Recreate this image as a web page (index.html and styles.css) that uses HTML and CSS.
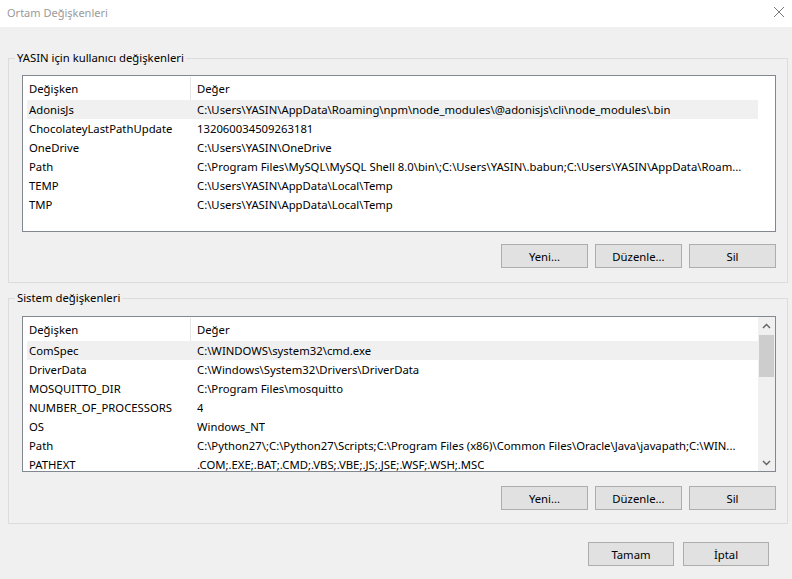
FILE: index.html
```html
<!DOCTYPE html>
<html lang="tr">
<head>
    <meta charset="UTF-8">
    <title>Ortam Değişkenleri</title>
    <link rel="stylesheet" href="styles.css">
</head>
<body>
    <div class="titlebar">
        <span class="title">Ortam Değişkenleri</span>
        <svg class="close" width="12" height="12" viewBox="0 0 12 12">
            <path d="M1 1 L11 11 M11 1 L1 11" stroke="#7a7a7a" stroke-width="1" fill="none"/>
        </svg>
    </div>

    <div class="content">
        <div class="group group-user">
            <div class="group-label">YASIN için kullanıcı değişkenleri</div>
            <div class="list list-user">
                <div class="list-main">
                    <div class="list-head">
                        <div class="head-name">Değişken</div>
                        <div class="head-value">Değer</div>
                    </div>
                    <div class="row selected"><div class="cell-name">AdonisJs</div><div class="cell-value">C:\Users\YASIN\AppData\Roaming\npm\node_modules\@adonisjs\cli\node_modules\.bin</div></div>
                    <div class="row"><div class="cell-name">ChocolateyLastPathUpdate</div><div class="cell-value">132060034509263181</div></div>
                    <div class="row"><div class="cell-name">OneDrive</div><div class="cell-value">C:\Users\YASIN\OneDrive</div></div>
                    <div class="row"><div class="cell-name">Path</div><div class="cell-value">C:\Program Files\MySQL\MySQL Shell 8.0\bin\;C:\Users\YASIN\.babun;C:\Users\YASIN\AppData\Roam...</div></div>
                    <div class="row"><div class="cell-name">TEMP</div><div class="cell-value">C:\Users\YASIN\AppData\Local\Temp</div></div>
                    <div class="row"><div class="cell-name">TMP</div><div class="cell-value">C:\Users\YASIN\AppData\Local\Temp</div></div>
                </div>
                <div class="scroll-space"></div>
            </div>
            <div class="buttons">
                <button class="btn">Yeni...</button>
                <button class="btn">Düzenle...</button>
                <button class="btn">Sil</button>
            </div>
        </div>

        <div class="group group-system">
            <div class="group-label">Sistem değişkenleri</div>
            <div class="list list-system">
                <div class="list-main">
                    <div class="list-head">
                        <div class="head-name">Değişken</div>
                        <div class="head-value">Değer</div>
                    </div>
                    <div class="row selected"><div class="cell-name">ComSpec</div><div class="cell-value">C:\WINDOWS\system32\cmd.exe</div></div>
                    <div class="row"><div class="cell-name">DriverData</div><div class="cell-value">C:\Windows\System32\Drivers\DriverData</div></div>
                    <div class="row"><div class="cell-name">MOSQUITTO_DIR</div><div class="cell-value">C:\Program Files\mosquitto</div></div>
                    <div class="row"><div class="cell-name">NUMBER_OF_PROCESSORS</div><div class="cell-value">4</div></div>
                    <div class="row"><div class="cell-name">OS</div><div class="cell-value">Windows_NT</div></div>
                    <div class="row"><div class="cell-name">Path</div><div class="cell-value">C:\Python27\;C:\Python27\Scripts;C:\Program Files (x86)\Common Files\Oracle\Java\javapath;C:\WIN...</div></div>
                    <div class="row"><div class="cell-name">PATHEXT</div><div class="cell-value">.COM;.EXE;.BAT;.CMD;.VBS;.VBE;.JS;.JSE;.WSF;.WSH;.MSC</div></div>
                </div>
                <div class="scrollbar">
                    <div class="scroll-arrow">
                        <svg width="9" height="6" viewBox="0 0 9 6"><path d="M1 5 L4.5 1.5 L8 5" stroke="#606060" stroke-width="1.4" fill="none"/></svg>
                    </div>
                    <div class="scroll-track">
                        <div class="scroll-thumb"></div>
                    </div>
                    <div class="scroll-arrow">
                        <svg width="9" height="6" viewBox="0 0 9 6"><path d="M1 1 L4.5 4.5 L8 1" stroke="#606060" stroke-width="1.4" fill="none"/></svg>
                    </div>
                </div>
            </div>
            <div class="buttons">
                <button class="btn">Yeni...</button>
                <button class="btn">Düzenle...</button>
                <button class="btn">Sil</button>
            </div>
        </div>

        <div class="dialog-buttons">
            <button class="btn btn-dialog">Tamam</button>
            <button class="btn btn-dialog">İptal</button>
        </div>
    </div>
</body>
</html>
```

FILE: styles.css
```css
body {
    margin: 0;
    padding: 0;
    width: 792px;
    height: 579px;
    overflow: hidden;
    background: #f0f0f0;
    font-family: 'Noto Sans', 'Open Sans', sans-serif;
    font-size: 11.3px;
    color: #000;
}

.titlebar {
    height: 24px;
    background: #fff;
    display: flex;
    align-items: center;
    justify-content: space-between;
    padding: 0 7px 3px 7px;
}

.title {
    color: #9a9a9a;
    font-size: 11px;
}

.close {
    margin-top: -1px;
}

.content {
    padding: 0 4px 0 8px;
}

.group {
    border: 1px solid #dcdcdc;
    padding: 0 11px 0 13px;
}

.group-user {
    margin-top: 31px;
    padding-bottom: 14px;
}

.group-system {
    margin-top: 15px;
    padding-bottom: 13px;
}

.group-label {
    display: table;
    margin: -9px 0 0 -7px;
    padding: 0 2px;
    line-height: 16px;
    background: #f0f0f0;
}

.list {
    display: flex;
    background: #fff;
    border: 1px solid #828790;
    overflow: hidden;
}

.list-user {
    margin-top: 9px;
    height: 155px;
}

.list-system {
    margin-top: 10px;
    height: 154px;
}

.list-main {
    flex: 1;
    min-width: 0;
}

.list-head {
    display: flex;
    height: 24px;
    align-items: center;
    padding-left: 4px;
}

.head-name {
    width: 161px;
    padding-left: 2px;
    height: 23px;
    line-height: 23px;
    border-right: 1px solid #e5e5e5;
}

.head-value {
    padding-left: 6px;
}

.row {
    display: flex;
    height: 19px;
    line-height: 19px;
    margin-left: 4px;
    white-space: nowrap;
}

.row.selected {
    background: #f0f0f0;
}

.cell-name {
    width: 168px;
    padding-left: 2px;
    flex-shrink: 0;
}

.cell-value {
    overflow: hidden;
}

.scroll-space {
    width: 17px;
}

.scrollbar {
    width: 17px;
    background: #f0f0f0;
    display: flex;
    flex-direction: column;
}

.scroll-arrow {
    height: 17px;
    display: flex;
    align-items: center;
    justify-content: center;
}

.scroll-track {
    flex: 1;
}

.scroll-thumb {
    height: 42px;
    margin: 1px 1px 0 1px;
    background: #cdcdcd;
}

.buttons {
    display: flex;
    justify-content: flex-end;
    gap: 7px;
    margin-top: 12px;
}

.btn {
    width: 87px;
    height: 24px;
    padding: 0;
    background: #e1e1e1;
    border: 1px solid #adadad;
    font-family: 'Noto Sans', 'Open Sans', sans-serif;
    font-size: 11.3px;
    color: #000;
}

.group-system .buttons {
    margin-top: 14px;
}

.dialog-buttons {
    display: flex;
    justify-content: flex-end;
    gap: 9px;
    margin-top: 18px;
    padding-right: 19px;
}

.btn-dialog {
    width: 86px;
}
```
